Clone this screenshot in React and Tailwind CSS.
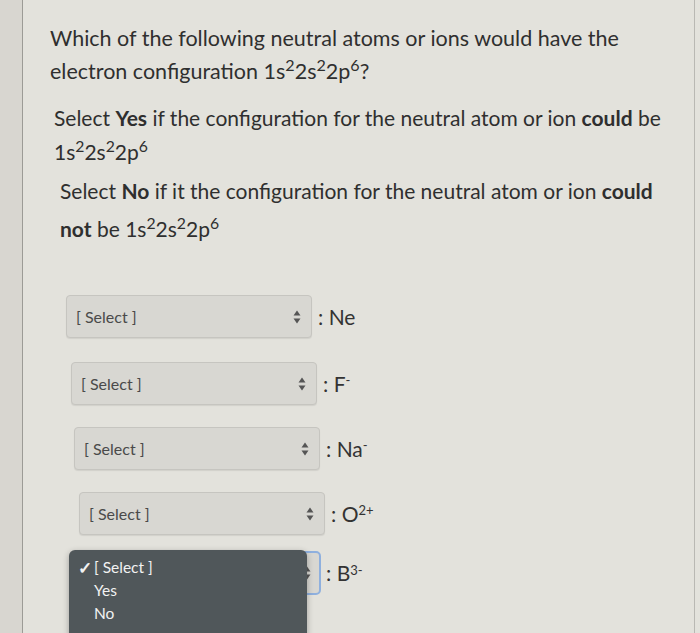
import React from 'react';

const rows = [
  { ml: 'ml-[43px]', mt: 'mt-[47px]', el: 'Ne', sup: '' },
  { ml: 'ml-[48px]', mt: 'mt-[24px]', el: 'F', sup: '-' },
  { ml: 'ml-[51px]', mt: 'mt-[22px]', el: 'Na', sup: '-' },
  { ml: 'ml-[56px]', mt: 'mt-[22px]', el: 'O', sup: '2+' },
];

function Arrows() {
  return (
    <svg width="8" height="14" viewBox="0 0 8 14" className="shrink-0">
      <path d="M4 0.5 L7.5 5.5 L0.5 5.5 Z" fill="#555" />
      <path d="M4 13.5 L7.5 8.5 L0.5 8.5 Z" fill="#555" />
    </svg>
  );
}

function Config() {
  return (
    <span>
      1s<sup>2</sup>2s<sup>2</sup>2p<sup>6</sup>
    </span>
  );
}

function SelectRow({ ml, mt, el, sup }) {
  return (
    <div className={`flex items-center ${ml} ${mt}`}>
      <div className="w-[246px] h-[43px] rounded-[4px] bg-[#d8d7d2] border border-[#c6c5c0] shadow-[0_1px_1px_rgba(0,0,0,0.08)] flex items-center justify-between pl-[9px] pr-[10px]">
        <span className="text-[16px] text-[#4a4a4a]">[ Select ]</span>
        <Arrows />
      </div>
      <span className="ml-[6px] text-[21px] text-[#333]">
        : {el}
        {sup && <sup className="text-[13px]">{sup}</sup>}
      </span>
    </div>
  );
}

export default function App() {
  return (
    <div
      className="w-[700px] h-[633px] overflow-hidden flex bg-[#e3e2dc] text-[#2f2f2f]"
      style={{ fontFamily: 'Lato, "Open Sans", sans-serif' }}
    >
      <div className="w-[23px] shrink-0 bg-[#d8d6d0] border-r border-[#9c9b96]" />
      <div className="flex-1 pr-[10px] border-r border-[#b9b8b3] mr-[5px]">
        <p className="ml-[27px] mt-[22px] text-[21.5px] leading-[33px]">
          Which of the following neutral atoms or ions would have the
          <br />
          electron configuration 1s<sup>2</sup>2s<sup>2</sup>2p<sup>6</sup>?
        </p>
        <p className="ml-[31px] mt-[13px] text-[21px] leading-[34px]">
          Select <b>Yes</b> if the configuration for the neutral atom or ion <b>could</b> be
          <br />
          <Config />
        </p>
        <p className="ml-[37px] mt-[3px] text-[21px] leading-[38px]">
          Select <b>No</b> if it the configuration for the neutral atom or ion <b>could</b>
          <br />
          <b>not</b> be <Config />
        </p>

        {rows.map((r) => (
          <SelectRow key={r.el} {...r} />
        ))}

        <div className="relative flex items-center ml-[58px] mt-[16px]">
          <div className="w-[240px] h-[44px] rounded-[5px] bg-[#d8d7d2] border-2 border-[#8fb0de] flex items-center justify-end pr-[8px]">
            <Arrows />
          </div>
          <span className="ml-[5px] text-[21px] text-[#333]">
            : B<sup className="text-[13px]">3-</sup>
          </span>
          <div className="absolute left-[-12px] top-[-1px] w-[238px] h-[90px] rounded-[6px] bg-[#50575a] shadow-[0_2px_6px_rgba(0,0,0,0.3)] pt-[6px] text-[15.5px] text-[#f2f2f2]">
            <div className="flex items-center h-[23px] pl-[9px]">
              <span className="w-[16px] text-[17px] font-bold">✓</span>
              <span>[ Select ]</span>
            </div>
            <div className="h-[23px] flex items-center pl-[25px]">Yes</div>
            <div className="h-[23px] flex items-center pl-[25px]">No</div>
          </div>
        </div>
      </div>
    </div>
  );
}
